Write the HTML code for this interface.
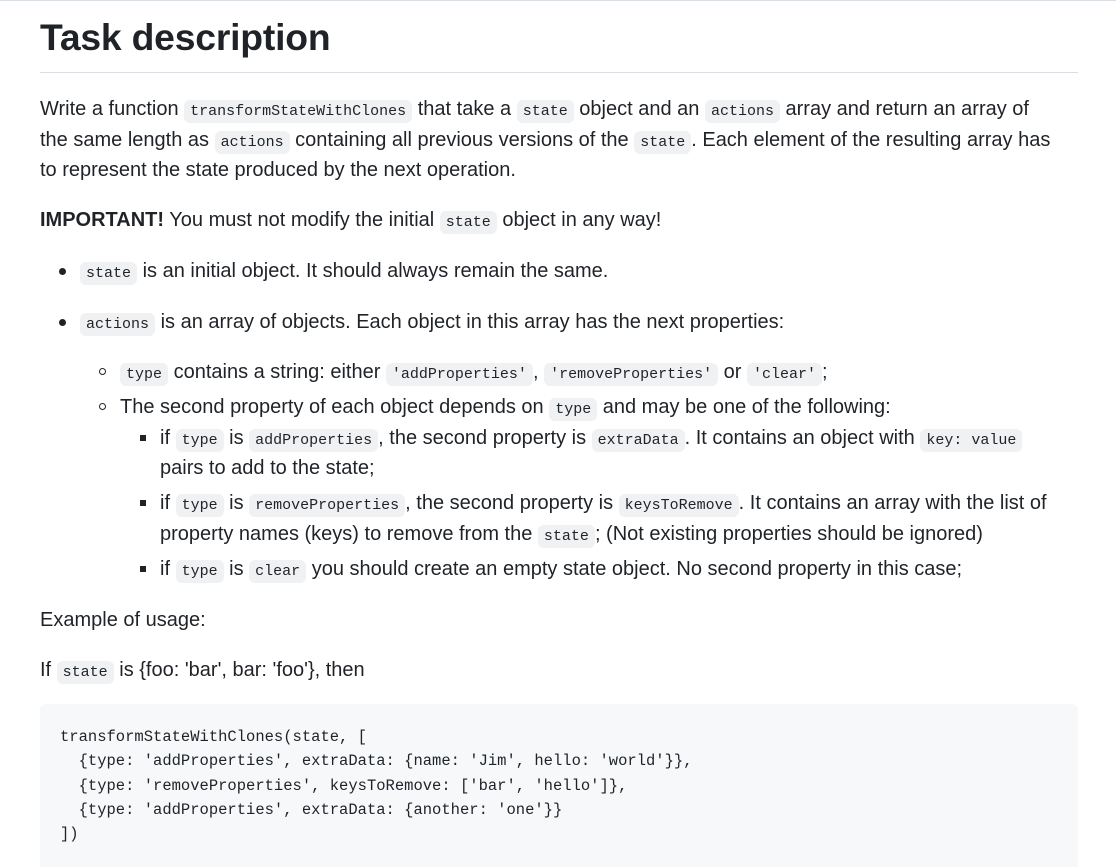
<!DOCTYPE html>
<html><head><meta charset="utf-8"><style>
html,body{margin:0;padding:0;background:#fff;width:1116px;height:867px;overflow:hidden;position:relative}
body{font-family:"Liberation Sans",Arial,sans-serif;color:#1f2328;font-size:20px}
.topline{position:absolute;left:0;top:0;width:1116px;height:1px;background:#d8dee4}
h1{position:absolute;left:40px;top:12px;margin:0;font-size:37.3px;font-weight:600;line-height:50px;letter-spacing:-0.2px}
.hr{position:absolute;left:40px;top:72px;width:1038px;height:1px;background:#d8dee4}
.l{position:absolute;height:30px;line-height:30px;white-space:nowrap}
code{font-family:"Liberation Mono",monospace;font-size:15px;background:#eff1f3;border-radius:6px;padding:3px 6px}
.dot{position:absolute;left:59px;width:7px;height:7px;border-radius:50%;background:#1f2328}
.circ{position:absolute;left:99px;width:5px;height:5px;border-radius:50%;border:1.3px solid #1f2328}
.sq{position:absolute;left:140px;width:6px;height:6px;background:#1f2328}
pre{position:absolute;left:40px;top:704px;width:1038px;height:180px;margin:0;background:#f6f8fa;border-radius:6px;font-family:"Liberation Mono",monospace;font-size:15.5px;line-height:24.5px;padding:0}
pre span{position:absolute;left:20px;white-space:pre}
</style></head><body>
<div class="topline"></div>
<h1>Task description</h1>
<div class="hr"></div>

<div class="l" style="left:40px;top:94px">Write a function <code>transformStateWithClones</code> that take a <code>state</code> object and an <code>actions</code> array and return an array of</div>
<div class="l" style="left:40px;top:125px">the same length as <code>actions</code> containing all previous versions of the <code>state</code>. Each element of the resulting array has</div>
<div class="l" style="left:40px;top:155px">to represent the state produced by the next operation.</div>

<div class="l" style="left:40px;top:205px"><b>IMPORTANT!</b> You must not modify the initial <code>state</code> object in any way!</div>

<div class="dot" style="top:268px"></div>
<div class="l" style="left:80px;top:256px"><code>state</code> is an initial object. It should always remain the same.</div>
<div class="dot" style="top:319px"></div>
<div class="l" style="left:80px;top:307px"><code>actions</code> is an array of objects. Each object in this array has the next properties:</div>

<div class="circ" style="top:368px"></div>
<div class="l" style="left:120px;top:357px"><code>type</code> contains a string: either <code>'addProperties'</code>, <code>'removeProperties'</code> or <code>'clear'</code>;</div>
<div class="circ" style="top:403px"></div>
<div class="l" style="left:120px;top:392px">The second property of each object depends on <code>type</code> and may be one of the following:</div>

<div class="sq" style="top:435px"></div>
<div class="l" style="left:160px;top:423px">if <code>type</code> is <code>addProperties</code>, the second property is <code>extraData</code>. It contains an object with <code>key: value</code></div>
<div class="l" style="left:160px;top:453px">pairs to add to the state;</div>
<div class="sq" style="top:500px"></div>
<div class="l" style="left:160px;top:488px">if <code>type</code> is <code>removeProperties</code>, the second property is <code>keysToRemove</code>. It contains an array with the list of</div>
<div class="l" style="left:160px;top:519px">property names (keys) to remove from the <code>state</code>; (Not existing properties should be ignored)</div>
<div class="sq" style="top:566px"></div>
<div class="l" style="left:160px;top:554px">if <code>type</code> is <code>clear</code> you should create an empty state object. No second property in this case;</div>

<div class="l" style="left:40px;top:605px">Example of usage:</div>
<div class="l" style="left:40px;top:655px">If <code>state</code> is {foo: 'bar', bar: 'foo'}, then</div>

<pre><span style="top:21px">transformStateWithClones(state, [</span><span style="top:45px">  {type: 'addProperties', extraData: {name: 'Jim', hello: 'world'}},</span><span style="top:70px">  {type: 'removeProperties', keysToRemove: ['bar', 'hello']},</span><span style="top:94px">  {type: 'addProperties', extraData: {another: 'one'}}</span><span style="top:118px">])</span></pre>
</body></html>
